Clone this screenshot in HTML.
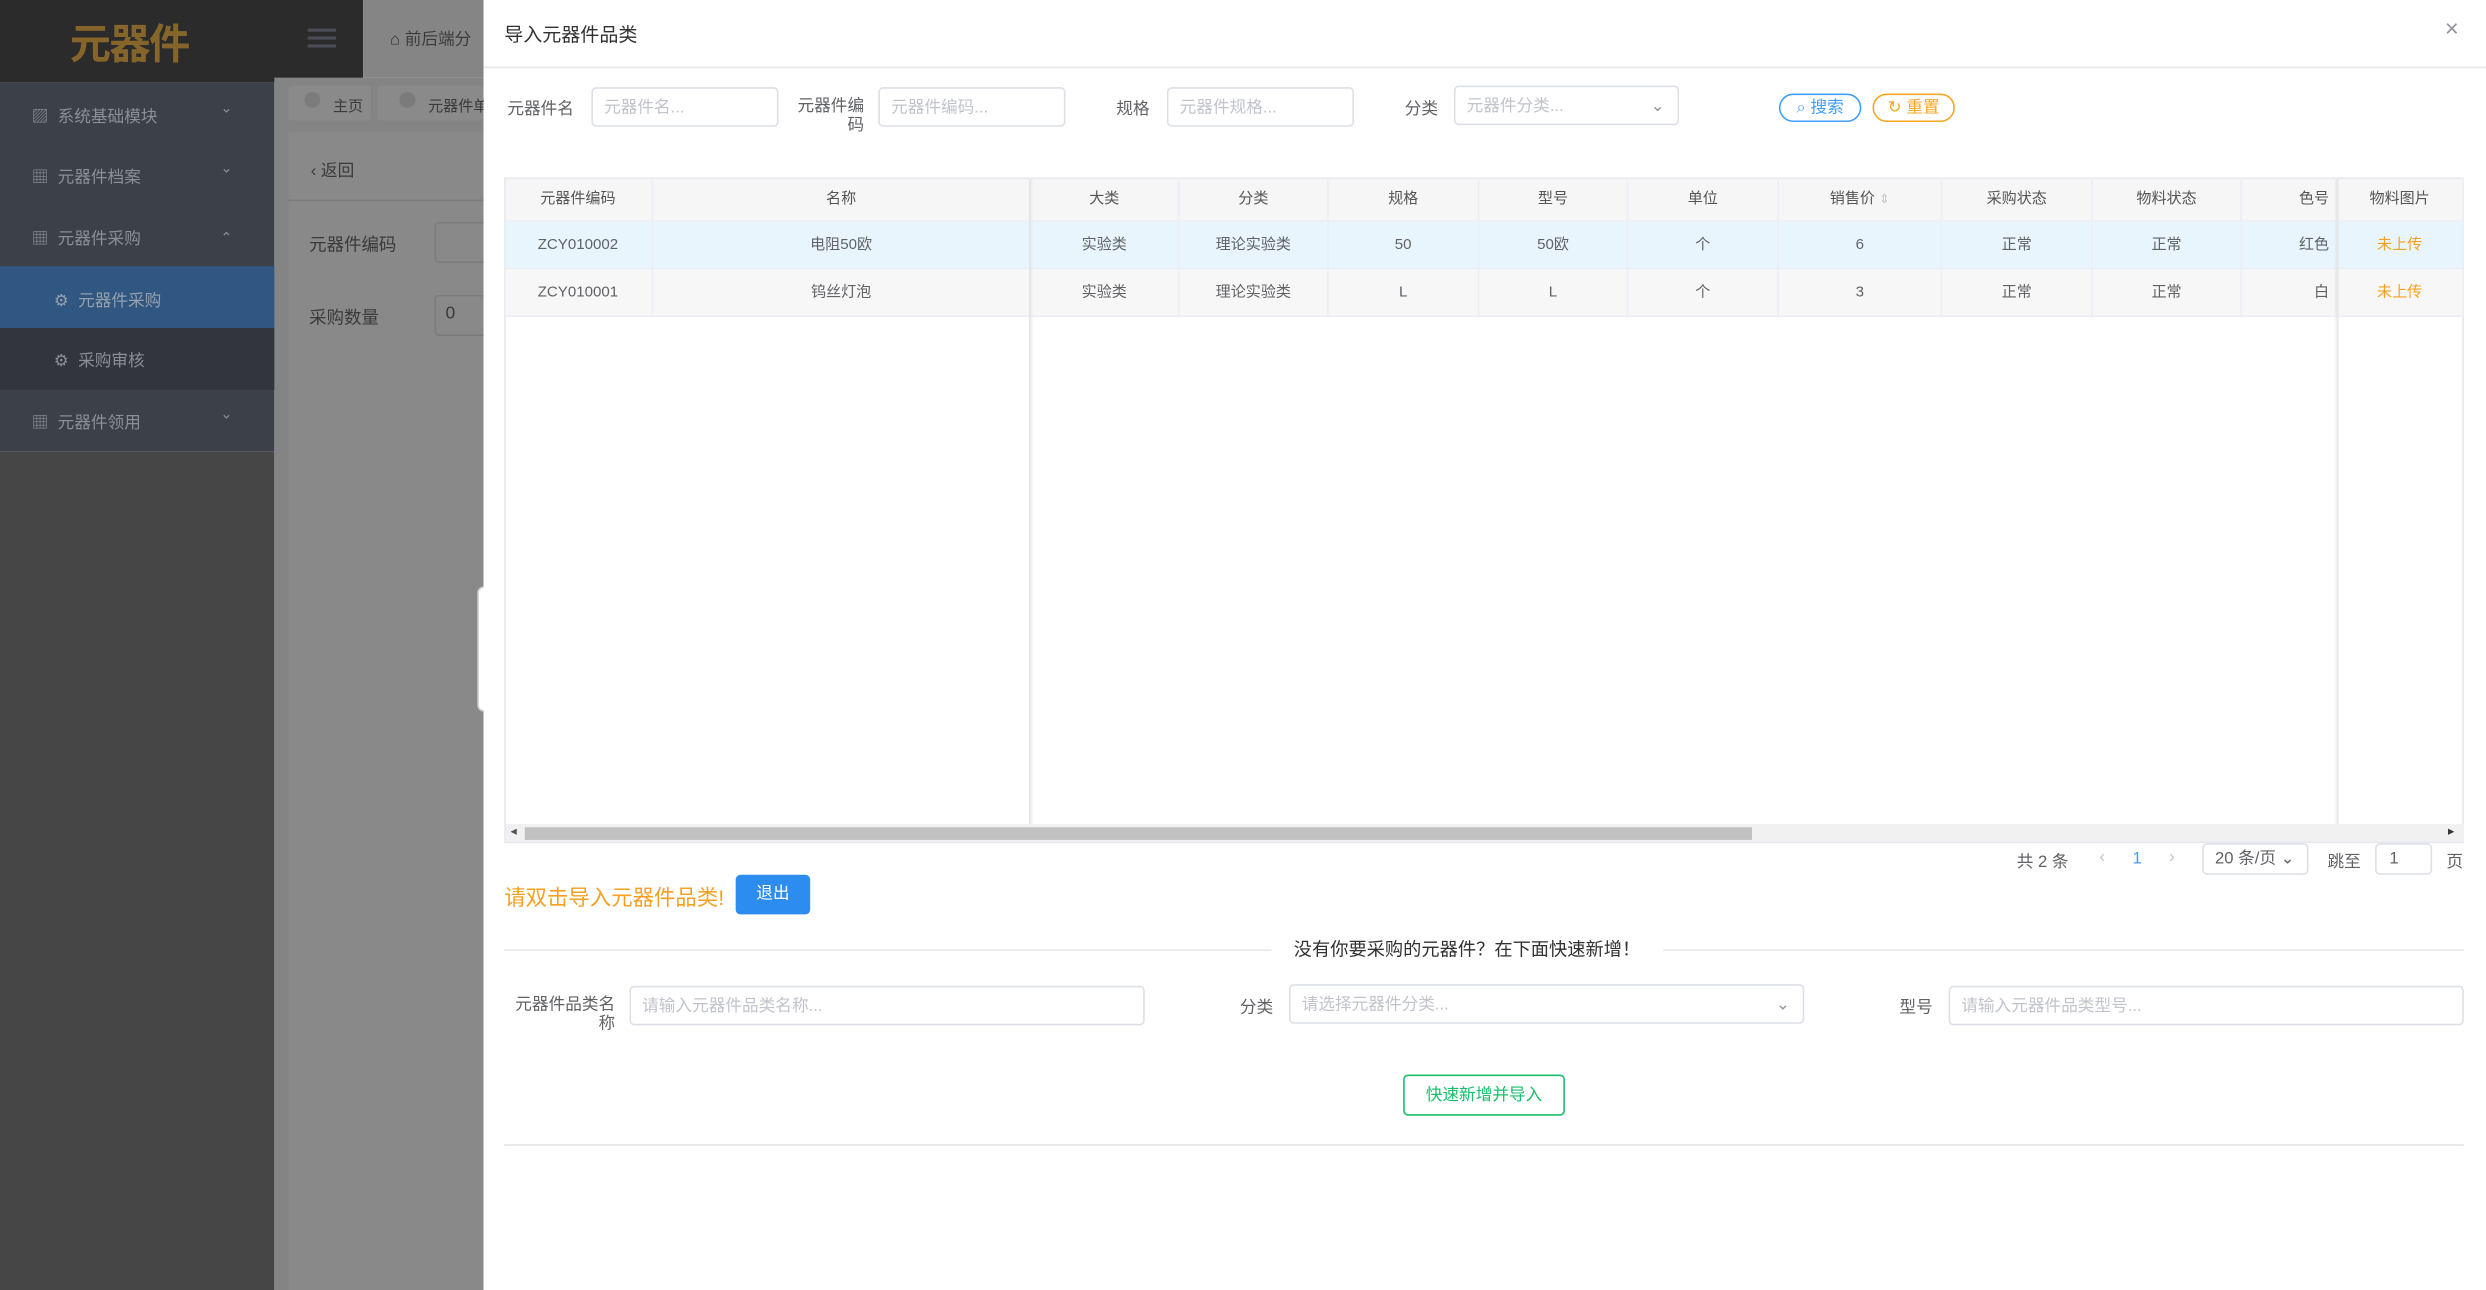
<!DOCTYPE html>
<html><head><meta charset="utf-8"><style>
*{box-sizing:border-box;margin:0;padding:0}
html,body{width:2486px;height:1290px;overflow:hidden;background:#fff}
#w{position:absolute;left:0;top:0;width:1568px;height:814px;transform:scale(1.5855,1.5848);transform-origin:0 0;font-family:"Liberation Sans","Noto Sans CJK SC",sans-serif;font-size:11px;color:#606266}
.a{position:absolute}
.sb{left:0;width:173px;color:#8a8e95;font-size:10.5px}
.inp{position:absolute;height:25px;border:1px solid #dcdfe6;border-radius:3px;color:#c0c4cc;font-size:10.5px;line-height:24px;padding-left:7px;background:#fff}
.lbl{position:absolute;font-size:10.5px;color:#606266}
.c{position:absolute;text-align:center;font-size:9.5px;line-height:29px;color:#606266;border-right:1px solid #ebeef5}
</style></head><body><div id="w">
<div class="a" style="left:0;top:0;width:229px;height:52px;background:#2b2b2b"></div>
<div class="a" style="left:44px;top:8px;font-size:26px;color:#86652b;font-weight:bold;letter-spacing:-1px">元器件</div>
<div class="a" style="left:194px;top:18px;width:18px;height:2px;background:#4a4d55;box-shadow:0 5px 0 #4a4d55,0 10px 0 #4a4d55"></div>
<div class="a" style="left:229px;top:0;width:76px;height:49px;background:#858585"></div>
<div class="a" style="left:246px;top:17px;color:#2d2d2d;font-size:10.5px">⌂ <span style="color:#3c3c3c">前后端分</span></div>
<div class="a" style="left:173px;top:49px;width:132px;height:765px;background:#848484"></div>
<div class="a" style="left:182px;top:54px;width:52px;height:22px;background:#8a8a8a;border-radius:2px"></div>
<div class="a" style="left:238px;top:54px;width:67px;height:22px;background:#8a8a8a;border-radius:2px"></div>
<div class="a" style="left:192px;top:58px;width:10px;height:10px;border-radius:50%;background:#7b7b7b"></div>
<div class="a" style="left:210px;top:59px;font-size:9.5px;color:#3a3a3a">主页</div>
<div class="a" style="left:252px;top:58px;width:10px;height:10px;border-radius:50%;background:#7b7b7b"></div>
<div class="a" style="left:270px;top:59px;font-size:9.5px;color:#3a3a3a">元器件单</div>
<div class="a" style="left:182px;top:83px;width:123px;height:731px;background:#898989"></div>
<div class="a" style="left:182px;top:126px;width:123px;height:1px;background:#7c7c7c"></div>
<div class="a" style="left:196px;top:100px;font-size:10.5px;color:#3a3a3a">‹ 返回</div>
<div class="a" style="left:195px;top:146px;font-size:11px;color:#3a3a3a">元器件编码</div>
<div class="a" style="left:195px;top:192px;font-size:11px;color:#3a3a3a">采购数量</div>
<div class="a" style="left:274px;top:140px;width:31px;height:26px;border:1px solid #7c7c7c;border-right:none;border-radius:3px 0 0 3px"></div>
<div class="a" style="left:274px;top:186px;width:31px;height:26px;border:1px solid #7c7c7c;border-right:none;border-radius:3px 0 0 3px;padding:5px 6px;color:#3a3a3a;font-size:11px">0</div>
<div class="a sb" style="top:52px;height:233px;background:#3c4048"></div>
<div class="a sb" style="top:168px;width:173px;height:39px;background:#2f5781"></div>
<div class="a sb" style="top:207px;height:39px;background:#33353c"></div>
<div class="a sb" style="top:285px;height:529px;background:#464646"></div>
<div class="a sb" style="left:20px;top:66px">▨ &nbsp;系统基础模块</div>
<div class="a sb" style="left:20px;top:104px">▦ &nbsp;元器件档案</div>
<div class="a sb" style="left:20px;top:143px">▦ &nbsp;元器件采购</div>
<div class="a sb" style="left:34px;top:182px;color:#94a0ae">⚙ &nbsp;元器件采购</div>
<div class="a sb" style="left:34px;top:220px">⚙ &nbsp;采购审核</div>
<div class="a sb" style="left:20px;top:259px">▦ &nbsp;元器件领用</div>
<div class="a" style="left:139px;top:63px;color:#8a8e95;font-size:9px">⌄</div>
<div class="a" style="left:139px;top:101px;color:#8a8e95;font-size:9px">⌄</div>
<div class="a" style="left:139px;top:145px;color:#8a8e95;font-size:9px">⌃</div>
<div class="a" style="left:139px;top:256px;color:#8a8e95;font-size:9px">⌄</div>
<div class="a" style="left:301px;top:370px;width:8px;height:79px;background:#fff;border-radius:4px;border:1px solid #ccc"></div>
<div class="a" style="left:305px;top:0;width:1263px;height:814px;background:#fff"></div>
<div class="a" style="left:318px;top:13px;font-size:12px;color:#303133">导入元器件品类</div>
<div class="a" style="left:1542px;top:10px;font-size:15px;color:#909399">×</div>
<div class="a" style="left:305px;top:42px;width:1263px;height:1px;background:#e8e8e8"></div>
<div class="lbl" style="left:320px;top:61px">元器件名</div>
<div class="inp" style="left:373px;top:55px;width:118px">元器件名...</div>
<div class="lbl" style="left:501px;top:61px;line-height:12px;text-align:right;width:44px">元器件编<br>码</div>
<div class="inp" style="left:554px;top:55px;width:118px">元器件编码...</div>
<div class="lbl" style="left:704px;top:61px">规格</div>
<div class="inp" style="left:736px;top:55px;width:118px">元器件规格...</div>
<div class="lbl" style="left:886px;top:61px">分类</div>
<div class="inp" style="left:917px;top:54px;width:142px">元器件分类...<span style="position:absolute;right:8px;color:#909399">⌄</span></div>
<div class="a" style="left:1122px;top:59px;width:52px;height:18px;border:1px solid #409eff;border-radius:9px;color:#409eff;font-size:10.5px;line-height:16px;text-align:center">⌕ 搜索</div>
<div class="a" style="left:1181px;top:59px;width:52px;height:18px;border:1px solid #f5a623;border-radius:9px;color:#f5a623;font-size:10.5px;line-height:16px;text-align:center">↻ 重置</div>
<div class="a" style="left:318px;top:112px;width:1236px;height:420px;border:1px solid #e4e7ed"></div>
<div class="a" style="left:319px;top:113px;width:1235px;height:27px;background:#f6f6f6;border-bottom:1px solid #ebeef5"></div>
<div class="a" style="left:319px;top:140px;width:1235px;height:30px;background:#e9f5fd;border-bottom:1px solid #ebeef5"></div>
<div class="a" style="left:319px;top:170px;width:1235px;height:30px;background:#f7f7f7;border-bottom:1px solid #ebeef5"></div>
<div id="cols"></div>
<div class="a" style="left:649px;top:113px;width:3px;height:418px;background:linear-gradient(90deg,#e4e4e4,#fff0)"></div>
<div class="a" style="left:1472px;top:113px;width:3px;height:418px;background:linear-gradient(270deg,#e4e4e4,#fff0)"></div>
<div class="a" style="left:319px;top:520px;width:1235px;height:11px;background:#f1f1f1"></div>
<div class="a" style="left:331px;top:522px;width:774px;height:8px;background:#c1c1c1"></div>
<div class="a" style="left:322px;top:520px;font-size:8px;color:#555">◂</div>
<div class="a" style="left:1544px;top:520px;font-size:8px;color:#333">▸</div>
<div class="a" style="left:1272px;top:536px;font-size:10.5px">共 2 条</div>
<div class="a" style="left:1324px;top:535px;color:#c0c4cc">‹</div>
<div class="a" style="left:1345px;top:536px;color:#409eff;font-size:10.5px">1</div>
<div class="a" style="left:1368px;top:535px;color:#c0c4cc">›</div>
<div class="a" style="left:1389px;top:532px;width:67px;height:20px;border:1px solid #dcdfe6;border-radius:3px;font-size:10.5px;line-height:18px;padding-left:7px">20 条/页 ⌄</div>
<div class="a" style="left:1468px;top:536px;font-size:10.5px">跳至</div>
<div class="a" style="left:1498px;top:532px;width:36px;height:20px;border:1px solid #dcdfe6;border-radius:3px;font-size:10.5px;line-height:18px;padding-left:8px">1</div>
<div class="a" style="left:1543px;top:536px;font-size:10.5px">页</div>
<div class="a" style="left:318px;top:555px;font-size:13.5px;color:#f5a020">请双击导入元器件品类!</div>
<div class="a" style="left:464px;top:552px;width:47px;height:25px;background:#2d8cf0;border-radius:3px;color:#fff;font-size:10.5px;line-height:25px;text-align:center">退出</div>
<div class="a" style="left:318px;top:599px;width:1236px;height:1px;background:#e8e8e8"></div>
<div class="a" style="left:802px;top:591px;padding:0 14px;background:#fff;font-size:11.5px;color:#303133">没有你要采购的元器件？在下面快速新增！</div>
<div class="lbl" style="left:320px;top:628px;width:68px;text-align:right;line-height:12px">元器件品类名<br>称</div>
<div class="inp" style="left:397px;top:622px;width:325px">请输入元器件品类名称...</div>
<div class="lbl" style="left:782px;top:628px">分类</div>
<div class="inp" style="left:813px;top:621px;width:325px">请选择元器件分类...<span style="position:absolute;right:8px;color:#909399">⌄</span></div>
<div class="lbl" style="left:1198px;top:628px">型号</div>
<div class="inp" style="left:1229px;top:622px;width:325px">请输入元器件品类型号...</div>
<div class="a" style="left:885px;top:678px;width:102px;height:26px;border:1px solid #19be6b;border-radius:3px;color:#19be6b;font-size:10.5px;line-height:24px;text-align:center">快速新增并导入</div>
<div class="a" style="left:318px;top:722px;width:1236px;height:1px;background:#e4e4e4"></div>
</div>
<script>
var cols=[[318,412,'元器件编码','ZCY010002','ZCY010001'],[412,650,'名称','电阻50欧','钨丝灯泡'],[650,744,'大类','实验类','实验类'],[744,838,'分类','理论实验类','理论实验类'],[838,933,'规格','50','L'],[933,1027,'型号','50欧','L'],[1027,1122,'单位','个','个'],[1122,1225,'销售价 <span style="color:#c0c4cc;font-size:8px">⇕</span>','6','3'],[1225,1320,'采购状态','正常','正常'],[1320,1414,'物料状态','正常','正常'],[1414,1474,'色号','红色','白'],[1474,1554,'物料图片','<span style="color:#f5a020">未上传</span>','<span style="color:#f5a020">未上传</span>']];
var h='';cols.forEach(function(c,i){var w=c[1]-c[0],al=i==10?'text-align:right;padding-right:4px;':'';
h+='<div class="c" style="left:'+c[0]+'px;top:112px;width:'+w+'px;height:28px;line-height:28px;'+al+'color:#555">'+c[2]+'</div>';
h+='<div class="c" style="left:'+c[0]+'px;top:140px;width:'+w+'px;height:30px;'+al+'">'+c[3]+'</div>';
h+='<div class="c" style="left:'+c[0]+'px;top:170px;width:'+w+'px;height:30px;'+al+'">'+c[4]+'</div>';});
document.getElementById('cols').innerHTML=h;
</script>
</body></html>
